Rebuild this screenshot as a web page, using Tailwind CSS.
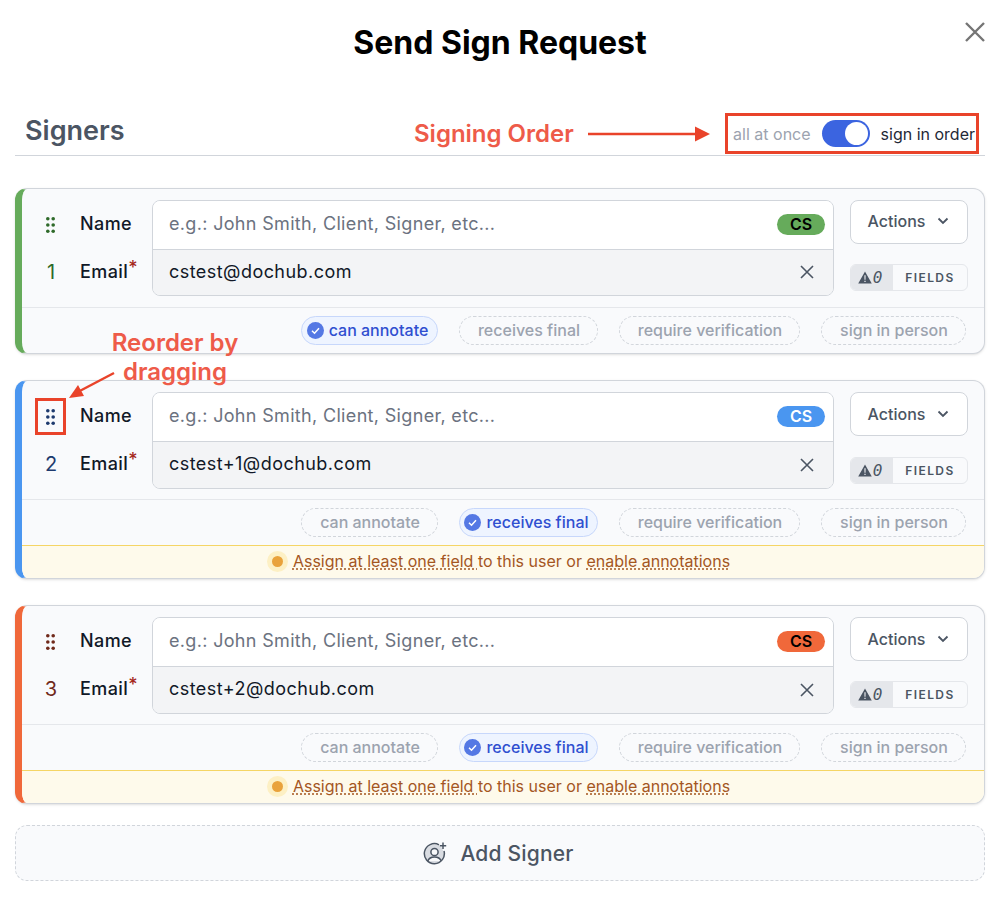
<!DOCTYPE html>
<html lang="en">
<head>
    <meta charset="UTF-8">
    <meta name="viewport" content="width=device-width, initial-scale=1.0">
    <title>Send Sign Request</title>
    <script src="https://cdn.jsdelivr.net/npm/@tailwindcss/browser@4"></script>
</head>
<body class="bg-white font-['Inter',sans-serif] text-[#111827] overflow-hidden">
<div class="relative w-[1000px] h-[901px]">

    <!-- close -->
    <svg class="absolute left-[965px] top-[22px] w-[20px] h-[20px] text-[#757575]" viewBox="0 0 20 20" fill="none" stroke="currentColor" stroke-width="2.4"><path d="M1 1 L19 19 M19 1 L1 19"/></svg>

    <h1 class="pt-[23px] h-[108px] text-center text-[32px] leading-[40px] font-bold text-black">Send Sign Request</h1>

    <!-- signers header -->
    <div class="mx-[15px] h-[48px] border-b border-[#d1d5db] flex items-center justify-between pl-[10px] pr-[10px]">
        <h2 class="text-[27px] leading-[32px] font-semibold text-[#4b5563] -mt-[2px]">Signers</h2>
        <div class="flex items-center text-[16px] mt-[4px]">
            <span class="text-[#9ca3af]">all at once</span>
            <span class="ml-[11px] w-[48px] h-[27px] rounded-full bg-[#3b64e0] relative"><span class="absolute right-[2px] top-[2px] w-[23px] h-[23px] rounded-full bg-white"></span></span>
            <span class="ml-[11px] text-[#1f2937]">sign in order</span>
        </div>
    </div>

    <div class="mx-[15px] mt-[32px] flex flex-col">

        <!-- signer 1 -->
        <div class="h-[166px] rounded-xl border border-[#d1d5db] border-l-[7px] border-l-[#66ab5b] bg-[#f9fafc] shadow-sm overflow-hidden">
            <div class="h-[119px] border-b border-[#e5e7eb] flex pt-[11px] pl-[14px] pr-[16px]">
                <div class="w-[116px] flex flex-col">
                    <div class="h-[49px] flex items-center">
                        <svg class="ml-[10px] w-[9px] h-[16px] text-[#2f6a2a]" viewBox="0 0 9 16" fill="currentColor"><circle cx="1.8" cy="1.8" r="1.8"/><circle cx="7.2" cy="1.8" r="1.8"/><circle cx="1.8" cy="8" r="1.8"/><circle cx="7.2" cy="8" r="1.8"/><circle cx="1.8" cy="14.2" r="1.8"/><circle cx="7.2" cy="14.2" r="1.8"/></svg>
                        <span class="ml-[25px] pb-[2px] text-[18px] tracking-[0.4px] font-medium">Name</span>
                    </div>
                    <div class="h-[47px] flex items-center pb-[2px]">
                        <span class="w-[44px] text-center pr-[14px] text-[20px] text-[#2f6a2a]">1</span>
                        <span class="text-[18px] tracking-[0.4px] font-medium">Email<span class="text-[#a5281b] relative -top-[4px]">*</span></span>
                    </div>
                </div>
                <div class="w-[682px] h-[96px] rounded-lg border border-[#d1d5db] overflow-hidden">
                    <div class="h-[49px] bg-white border-b border-[#d1d5db] flex items-center justify-between pl-[16px] pr-[8px] pb-[2px]">
                        <span class="pb-[2px] text-[18px] tracking-[0.33px] text-[#6b7280]">e.g.: John Smith, Client, Signer, etc...</span>
                        <span class="w-[48px] h-[21px] rounded-full bg-[#66ab5b] text-black text-[16px] leading-[21px] font-semibold text-center">CS</span>
                    </div>
                    <div class="h-[46px] bg-[#f3f4f6] flex items-center justify-between pl-[16px] pr-[19px] pb-[2px]">
                        <span class="pb-[2px] text-[18px] tracking-[0.45px] text-[#111827]">cstest@dochub.com</span>
                        <svg class="w-[14px] h-[14px] text-[#4b5563]" viewBox="0 0 14 14" fill="none" stroke="currentColor" stroke-width="1.6"><path d="M1 1 L13 13 M13 1 L1 13"/></svg>
                    </div>
                </div>
                <div class="ml-[16px] w-[118px] flex flex-col">
                    <div class="h-[44px] rounded-lg border border-[#d1d5db] bg-white flex items-center justify-center gap-[12px] pb-[2px] pr-[1px] text-[16px] font-medium text-[#4b5563]">Actions
                        <svg class="w-[12px] h-[8px]" viewBox="0 0 12 8" fill="none" stroke="currentColor" stroke-width="1.8"><path d="M1.5 1.5 L6 6 L10.5 1.5"/></svg>
                    </div>
                    <div class="mt-[20px] h-[27px] rounded-md border border-[#e5e7eb] flex overflow-hidden">
                        <span class="w-[42px] bg-[#e5e7eb] flex items-center justify-center gap-[1px] pr-[4px] text-[#4b5563] font-['DejaVu_Sans_Mono',monospace] text-[16px] italic">
                            <svg class="w-[14px] h-[13px]" viewBox="0 0 13 12"><path fill="currentColor" fill-rule="evenodd" d="M6.5 0.5 L12.8 11.5 L0.2 11.5 Z M5.9 4 L7.1 4 L7 8 L6 8 Z M5.9 9 L7.1 9 L7.1 10.2 L5.9 10.2 Z"/></svg>0</span>
                        <span class="flex-1 flex items-center justify-center text-[12px] font-semibold tracking-[1.4px] text-[#4b5563]">FIELDS</span>
                    </div>
                </div>
            </div>
            <div class="h-[45px] flex items-start justify-end gap-[21px] pt-[8px] pr-[18px] text-[16px] font-medium">
                <span class="w-[137px] h-[29px] pr-[4px] pb-[1px] rounded-full border border-[#c7d7fb] bg-[#eef4ff] text-[#2f4fd0] flex items-center justify-center gap-[5px]">
                    <svg class="w-[17px] h-[17px]" viewBox="0 0 17 17"><circle cx="8.5" cy="8.5" r="8.5" fill="#5478e4"/><path d="M5 8.8 L7.5 11.2 L12 6.2" fill="none" stroke="#fff" stroke-width="1.5"/></svg>can annotate</span>
                <span class="w-[139px] h-[29px] pl-[1px] pb-[2px] rounded-full border border-dashed border-[#d1d5db] text-[#9ca3af] flex items-center justify-center">receives final</span>
                <span class="w-[181px] h-[29px] pl-[1px] pb-[2px] rounded-full border border-dashed border-[#d1d5db] text-[#9ca3af] flex items-center justify-center">require verification</span>
                <span class="w-[145px] h-[29px] pl-[1px] pb-[2px] rounded-full border border-dashed border-[#d1d5db] text-[#9ca3af] flex items-center justify-center">sign in person</span>
            </div>
        </div>

        <!-- signer 2 -->
        <div class="mt-[26px] h-[199px] rounded-xl border border-[#d1d5db] border-l-[7px] border-l-[#4a96f0] bg-[#f9fafc] shadow-sm overflow-hidden">
            <div class="h-[119px] border-b border-[#e5e7eb] flex pt-[11px] pl-[14px] pr-[16px]">
                <div class="w-[116px] flex flex-col">
                    <div class="h-[49px] flex items-center">
                        <svg class="ml-[10px] w-[9px] h-[16px] text-[#1e3a6e]" viewBox="0 0 9 16" fill="currentColor"><circle cx="1.8" cy="1.8" r="1.8"/><circle cx="7.2" cy="1.8" r="1.8"/><circle cx="1.8" cy="8" r="1.8"/><circle cx="7.2" cy="8" r="1.8"/><circle cx="1.8" cy="14.2" r="1.8"/><circle cx="7.2" cy="14.2" r="1.8"/></svg>
                        <span class="ml-[25px] pb-[2px] text-[18px] tracking-[0.4px] font-medium">Name</span>
                    </div>
                    <div class="h-[47px] flex items-center pb-[2px]">
                        <span class="w-[44px] text-center pr-[14px] text-[20px] text-[#1e3a6e]">2</span>
                        <span class="text-[18px] tracking-[0.4px] font-medium">Email<span class="text-[#a5281b] relative -top-[4px]">*</span></span>
                    </div>
                </div>
                <div class="w-[682px] h-[97px] rounded-lg border border-[#d1d5db] overflow-hidden">
                    <div class="h-[49px] bg-white border-b border-[#d1d5db] flex items-center justify-between pl-[16px] pr-[8px] pb-[2px]">
                        <span class="pb-[2px] text-[18px] tracking-[0.33px] text-[#6b7280]">e.g.: John Smith, Client, Signer, etc...</span>
                        <span class="w-[48px] h-[21px] rounded-full bg-[#4a96f0] text-white text-[16px] leading-[21px] font-semibold text-center">CS</span>
                    </div>
                    <div class="h-[47px] bg-[#f3f4f6] flex items-center justify-between pl-[16px] pr-[19px] pb-[2px]">
                        <span class="pb-[2px] text-[18px] tracking-[0.45px] text-[#111827]">cstest+1@dochub.com</span>
                        <svg class="w-[14px] h-[14px] text-[#4b5563]" viewBox="0 0 14 14" fill="none" stroke="currentColor" stroke-width="1.6"><path d="M1 1 L13 13 M13 1 L1 13"/></svg>
                    </div>
                </div>
                <div class="ml-[16px] w-[118px] flex flex-col">
                    <div class="h-[44px] rounded-lg border border-[#d1d5db] bg-white flex items-center justify-center gap-[12px] pr-[1px] text-[16px] font-medium text-[#4b5563]">Actions
                        <svg class="w-[12px] h-[8px]" viewBox="0 0 12 8" fill="none" stroke="currentColor" stroke-width="1.8"><path d="M1.5 1.5 L6 6 L10.5 1.5"/></svg>
                    </div>
                    <div class="mt-[21px] h-[27px] rounded-md border border-[#e5e7eb] flex overflow-hidden">
                        <span class="w-[42px] bg-[#e5e7eb] flex items-center justify-center gap-[1px] pr-[4px] text-[#4b5563] font-['DejaVu_Sans_Mono',monospace] text-[16px] italic">
                            <svg class="w-[14px] h-[13px]" viewBox="0 0 13 12"><path fill="currentColor" fill-rule="evenodd" d="M6.5 0.5 L12.8 11.5 L0.2 11.5 Z M5.9 4 L7.1 4 L7 8 L6 8 Z M5.9 9 L7.1 9 L7.1 10.2 L5.9 10.2 Z"/></svg>0</span>
                        <span class="flex-1 flex items-center justify-center text-[12px] font-semibold tracking-[1.4px] text-[#4b5563]">FIELDS</span>
                    </div>
                </div>
            </div>
            <div class="h-[45px] flex items-start justify-end gap-[21px] pt-[8px] pr-[18px] text-[16px] font-medium">
                <span class="w-[137px] h-[29px] pl-[1px] pb-[2px] rounded-full border border-dashed border-[#d1d5db] text-[#9ca3af] flex items-center justify-center">can annotate</span>
                <span class="w-[139px] h-[29px] pr-[4px] pb-[1px] rounded-full border border-[#c7d7fb] bg-[#eef4ff] text-[#2f4fd0] flex items-center justify-center gap-[5px]">
                    <svg class="w-[17px] h-[17px]" viewBox="0 0 17 17"><circle cx="8.5" cy="8.5" r="8.5" fill="#5478e4"/><path d="M5 8.8 L7.5 11.2 L12 6.2" fill="none" stroke="#fff" stroke-width="1.5"/></svg>receives final</span>
                <span class="w-[181px] h-[29px] pl-[1px] pb-[2px] rounded-full border border-dashed border-[#d1d5db] text-[#9ca3af] flex items-center justify-center">require verification</span>
                <span class="w-[145px] h-[29px] pl-[1px] pb-[2px] rounded-full border border-dashed border-[#d1d5db] text-[#9ca3af] flex items-center justify-center">sign in person</span>
            </div>
            <div class="h-[33px] border-t border-[#f5d565] bg-[#fefaeb] flex items-center justify-center gap-[5px] pb-[2px] pr-[9px] text-[16px] text-[#a4561f]">
                <span class="w-[21px] h-[21px] rounded-full bg-[#fdf0c4] flex items-center justify-center"><span class="w-[11px] h-[11px] rounded-full bg-[#e9a23b]"></span></span>
                <span><span class="underline decoration-dotted underline-offset-2">Assign at least one field </span>to this user or <span class="underline decoration-dotted underline-offset-2">enable annotations</span></span>
            </div>
        </div>

        <!-- signer 3 -->
        <div class="mt-[26px] h-[199px] rounded-xl border border-[#d1d5db] border-l-[7px] border-l-[#f0683a] bg-[#f9fafc] shadow-sm overflow-hidden">
            <div class="h-[119px] border-b border-[#e5e7eb] flex pt-[11px] pl-[14px] pr-[16px]">
                <div class="w-[116px] flex flex-col">
                    <div class="h-[49px] flex items-center">
                        <svg class="ml-[10px] w-[9px] h-[16px] text-[#70291a]" viewBox="0 0 9 16" fill="currentColor"><circle cx="1.8" cy="1.8" r="1.8"/><circle cx="7.2" cy="1.8" r="1.8"/><circle cx="1.8" cy="8" r="1.8"/><circle cx="7.2" cy="8" r="1.8"/><circle cx="1.8" cy="14.2" r="1.8"/><circle cx="7.2" cy="14.2" r="1.8"/></svg>
                        <span class="ml-[25px] pb-[2px] text-[18px] tracking-[0.4px] font-medium">Name</span>
                    </div>
                    <div class="h-[47px] flex items-center pb-[2px]">
                        <span class="w-[44px] text-center pr-[14px] text-[20px] text-[#70291a]">3</span>
                        <span class="text-[18px] tracking-[0.4px] font-medium">Email<span class="text-[#a5281b] relative -top-[4px]">*</span></span>
                    </div>
                </div>
                <div class="w-[682px] h-[97px] rounded-lg border border-[#d1d5db] overflow-hidden">
                    <div class="h-[49px] bg-white border-b border-[#d1d5db] flex items-center justify-between pl-[16px] pr-[8px] pb-[2px]">
                        <span class="pb-[2px] text-[18px] tracking-[0.33px] text-[#6b7280]">e.g.: John Smith, Client, Signer, etc...</span>
                        <span class="w-[48px] h-[21px] rounded-full bg-[#f0683a] text-black text-[16px] leading-[21px] font-semibold text-center">CS</span>
                    </div>
                    <div class="h-[47px] bg-[#f3f4f6] flex items-center justify-between pl-[16px] pr-[19px] pb-[2px]">
                        <span class="pb-[2px] text-[18px] tracking-[0.45px] text-[#111827]">cstest+2@dochub.com</span>
                        <svg class="w-[14px] h-[14px] text-[#4b5563]" viewBox="0 0 14 14" fill="none" stroke="currentColor" stroke-width="1.6"><path d="M1 1 L13 13 M13 1 L1 13"/></svg>
                    </div>
                </div>
                <div class="ml-[16px] w-[118px] flex flex-col">
                    <div class="h-[44px] rounded-lg border border-[#d1d5db] bg-white flex items-center justify-center gap-[12px] pr-[1px] text-[16px] font-medium text-[#4b5563]">Actions
                        <svg class="w-[12px] h-[8px]" viewBox="0 0 12 8" fill="none" stroke="currentColor" stroke-width="1.8"><path d="M1.5 1.5 L6 6 L10.5 1.5"/></svg>
                    </div>
                    <div class="mt-[20px] h-[27px] rounded-md border border-[#e5e7eb] flex overflow-hidden">
                        <span class="w-[42px] bg-[#e5e7eb] flex items-center justify-center gap-[1px] pr-[4px] text-[#4b5563] font-['DejaVu_Sans_Mono',monospace] text-[16px] italic">
                            <svg class="w-[14px] h-[13px]" viewBox="0 0 13 12"><path fill="currentColor" fill-rule="evenodd" d="M6.5 0.5 L12.8 11.5 L0.2 11.5 Z M5.9 4 L7.1 4 L7 8 L6 8 Z M5.9 9 L7.1 9 L7.1 10.2 L5.9 10.2 Z"/></svg>0</span>
                        <span class="flex-1 flex items-center justify-center text-[12px] font-semibold tracking-[1.4px] text-[#4b5563]">FIELDS</span>
                    </div>
                </div>
            </div>
            <div class="h-[45px] flex items-start justify-end gap-[21px] pt-[8px] pr-[18px] text-[16px] font-medium">
                <span class="w-[137px] h-[29px] pl-[1px] pb-[2px] rounded-full border border-dashed border-[#d1d5db] text-[#9ca3af] flex items-center justify-center">can annotate</span>
                <span class="w-[139px] h-[29px] pr-[4px] pb-[1px] rounded-full border border-[#c7d7fb] bg-[#eef4ff] text-[#2f4fd0] flex items-center justify-center gap-[5px]">
                    <svg class="w-[17px] h-[17px]" viewBox="0 0 17 17"><circle cx="8.5" cy="8.5" r="8.5" fill="#5478e4"/><path d="M5 8.8 L7.5 11.2 L12 6.2" fill="none" stroke="#fff" stroke-width="1.5"/></svg>receives final</span>
                <span class="w-[181px] h-[29px] pl-[1px] pb-[2px] rounded-full border border-dashed border-[#d1d5db] text-[#9ca3af] flex items-center justify-center">require verification</span>
                <span class="w-[145px] h-[29px] pl-[1px] pb-[2px] rounded-full border border-dashed border-[#d1d5db] text-[#9ca3af] flex items-center justify-center">sign in person</span>
            </div>
            <div class="h-[33px] border-t border-[#f5d565] bg-[#fefaeb] flex items-center justify-center gap-[5px] pb-[2px] pr-[9px] text-[16px] text-[#a4561f]">
                <span class="w-[21px] h-[21px] rounded-full bg-[#fdf0c4] flex items-center justify-center"><span class="w-[11px] h-[11px] rounded-full bg-[#e9a23b]"></span></span>
                <span><span class="underline decoration-dotted underline-offset-2">Assign at least one field </span>to this user or <span class="underline decoration-dotted underline-offset-2">enable annotations</span></span>
            </div>
        </div>

        <!-- add signer -->
        <div class="mt-[21px] h-[56px] rounded-xl border border-dashed border-[#d1d5db] bg-[#f9fafc] flex items-center justify-center gap-[13px] pt-[1px] pr-[3px] text-[21px] tracking-[0.2px] font-medium text-[#4b5563]">
            <svg class="w-[24px] h-[24px]" viewBox="0 0 24 24" fill="none" stroke="currentColor" stroke-width="1.5">
                <circle cx="11.5" cy="12" r="9.5" fill="#d1d5db" stroke="none" opacity="0.8"/>
                <path d="M16 2.8 A10 10 0 1 0 21 9" />
                <circle cx="11.5" cy="10" r="3.6" fill="#f9fafc"/>
                <path d="M4.8 19 C6 15.8 8.5 15 11.5 15 C14.5 15 17 15.8 18.2 19" fill="#f9fafc"/>
                <path d="M20 0.5 V7 M16.8 3.7 H23.2"/>
            </svg>
            Add Signer
        </div>
    </div>

    <!-- annotations -->
    <span class="absolute left-[414px] top-[119px] text-[24px] leading-[30px] font-semibold text-[#ee5b49]">Signing Order</span>
    <svg class="absolute left-[588px] top-[124px] w-[124px] h-[20px]" viewBox="0 0 124 20"><path d="M0 10 H110" stroke="#e9432a" stroke-width="2.5"/><path d="M107 2.5 L122 10 L107 17.5 Z" fill="#e9432a"/></svg>
    <div class="absolute left-[725px] top-[113px] w-[254px] h-[41px] border-[3px] border-[#e9432a]"></div>
    <div class="absolute left-[95px] top-[328px] w-[160px] text-center text-[24px] leading-[29px] font-semibold text-[#ee5b49]">Reorder by<br>dragging</div>
    <svg class="absolute left-[66px] top-[371px] w-[50px] h-[30px]" viewBox="0 0 50 30"><path d="M48 2 L8 23" stroke="#e9432a" stroke-width="2.5"/><path d="M3 27 L12 14 L18 25 Z" fill="#e9432a"/></svg>
    <div class="absolute left-[35px] top-[398px] w-[31px] h-[37px] border-[3px] border-[#e9432a]"></div>
</div>
</body>
</html>
